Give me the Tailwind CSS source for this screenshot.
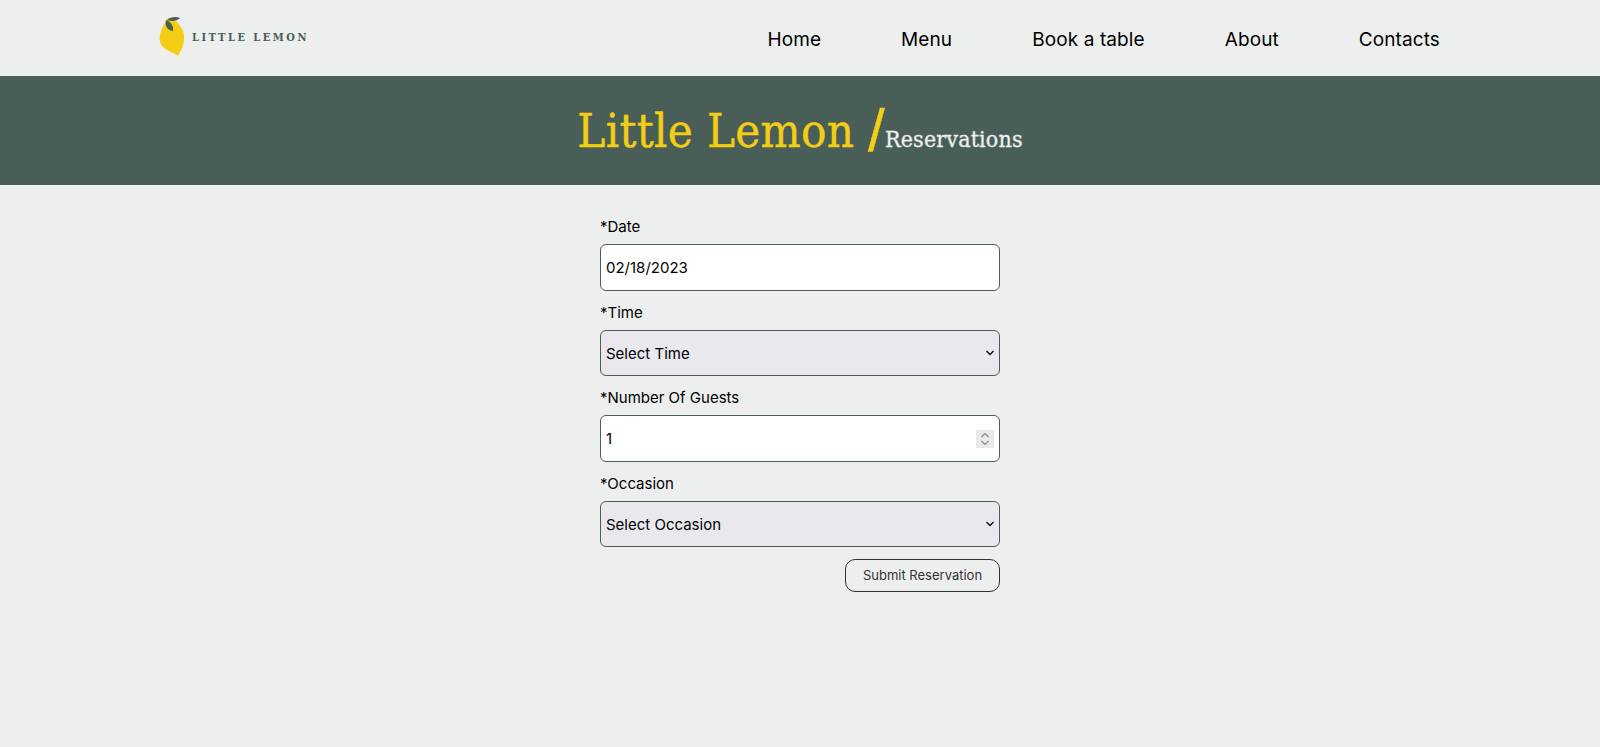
<!DOCTYPE html>
<html lang="en">
<head>
    <meta charset="UTF-8">
    <meta name="viewport" content="width=device-width, initial-scale=1.0">
    <title>Little Lemon Reservations</title>
    <script src="https://cdn.jsdelivr.net/npm/@tailwindcss/browser@4"></script>
</head>
<body class="bg-[#edefee] min-h-screen font-['Inter',sans-serif] text-black">

    <!-- Nav -->
    <header class="h-[76px] flex items-center justify-between pl-[159px] pr-[160px]">
        <a href="#" class="flex items-center gap-[5px] pb-[2px]">
            <svg width="28" height="42" viewBox="0 0 28 42">
                <path d="M9 2C12 2 15 3 17 5C21 10 25 14 25 20C25.500 27 23 33 19 40C14 36 8 35 4 31C0 27 0 21 2 15C4 11 6 6 9 2Z" fill="#f4ce14"/>
                <path d="M8 4C11 1 17 0 21 2C18 5 13 6 8 4Z" fill="#495e57"/>
                <path d="M7 4C11 5 15 10 14 15C10 15 5 11 7 4Z" fill="#495e57"/>
            </svg>
            <span class="font-['DejaVu_Serif_Condensed','Liberation_Serif',serif] font-bold text-[11px] tracking-[2.5px] text-[#495e57] pt-[2px]">LITTLE LEMON</span>
        </a>
        <nav class="flex gap-[80px] text-[19px] tracking-[0.1px] pt-[5px]">
            <a href="#">Home</a>
            <a href="#">Menu</a>
            <a href="#">Book a table</a>
            <a href="#">About</a>
            <a href="#">Contacts</a>
        </nav>
    </header>

    <!-- Banner -->
    <section class="h-[109px] bg-[#495e57] flex justify-center items-baseline pt-[21px] font-['DejaVu_Serif_Condensed','Liberation_Serif',serif]">
        <h1 class="text-[47px] leading-none tracking-[0.3px] text-[#f4ce14] [-webkit-text-stroke:0.4px_#f4ce14]">Little Lemon <span class="relative top-[4px] text-[60px] font-['Liberation_Sans',sans-serif]">/</span></h1>
        <h2 class="text-[23px] leading-none tracking-[0.15px] text-[#edefee] [-webkit-text-stroke:0.3px_#edefee]">Reservations</h2>
    </section>

    <!-- Form -->
    <form class="w-[400px] mx-auto pt-[32px] flex flex-col text-[15px] leading-[19px]">
        <label for="date" class="mb-[8px]">*Date</label>
        <input id="date" type="text" value="02/18/2023" class="h-[47px] bg-white border border-[#495e57] rounded-[6px] px-[5px] mb-[12px]">

        <label for="time" class="mb-[8px]">*Time</label>
        <div class="relative mb-[12px]">
            <select id="time" class="appearance-none block w-full h-[46px] bg-[#e9e9ed] border border-[#495e57] rounded-[6px] px-[5px]">
                <option>Select Time</option>
            </select>
            <svg class="absolute right-[6px] top-[20px] pointer-events-none" width="8" height="6" viewBox="0 0 8 6" fill="none" stroke="#111111" stroke-width="1.400">
                <path d="M0.500 1L4 4.500L7.500 1"/>
            </svg>
        </div>

        <label for="guests" class="mb-[8px]">*Number Of Guests</label>
        <div class="relative mb-[12px]">
            <input id="guests" type="text" value="1" class="w-full h-[47px] bg-white border border-[#495e57] rounded-[6px] px-[5px] block">
            <span class="absolute right-[6px] top-[15px] w-[18px] h-[18px] bg-[#e9e9ed] flex items-center justify-center">
                <svg width="10" height="14" viewBox="0 0 10 14" fill="none" stroke="#8a8a8a" stroke-width="1.200">
                    <path d="M1.500 5L5 1.500L8.500 5"/>
                    <path d="M1.500 9L5 12.500L8.500 9"/>
                </svg>
            </span>
        </div>

        <label for="occasion" class="mb-[8px]">*Occasion</label>
        <div class="relative mb-[12px]">
            <select id="occasion" class="appearance-none block w-full h-[46px] bg-[#e9e9ed] border border-[#495e57] rounded-[6px] px-[5px]">
                <option>Select Occasion</option>
            </select>
            <svg class="absolute right-[6px] top-[20px] pointer-events-none" width="8" height="6" viewBox="0 0 8 6" fill="none" stroke="#111111" stroke-width="1.400">
                <path d="M0.500 1L4 4.500L7.500 1"/>
            </svg>
        </div>

        <div class="flex justify-end">
            <button type="button" class="w-[155px] h-[33px] border border-[#333333] rounded-[10px] text-[13px] text-[#333333]">Submit Reservation</button>
        </div>
    </form>

</body>
</html>
